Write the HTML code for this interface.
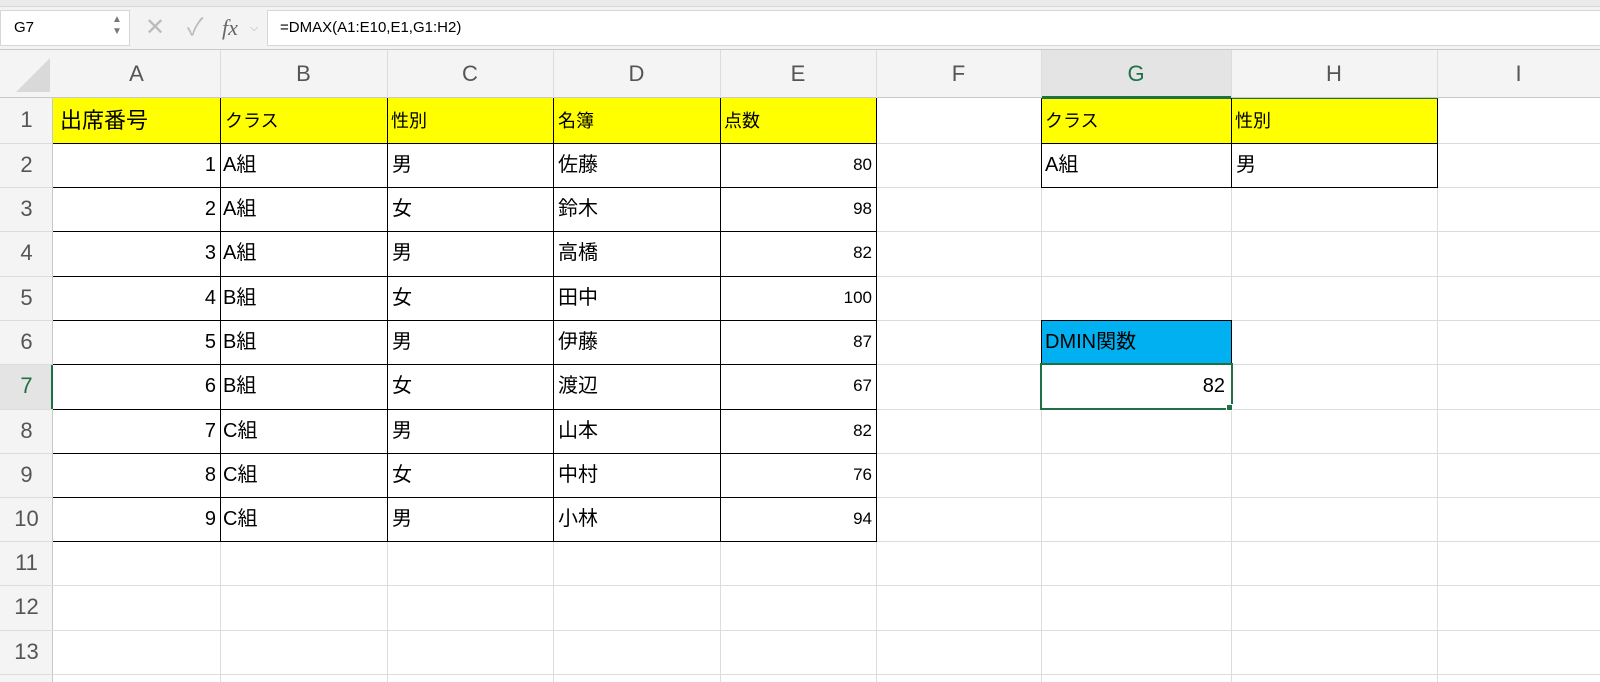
<!DOCTYPE html>
<html><head><meta charset="utf-8"><style>
body{margin:0;width:1600px;height:682px;overflow:hidden;background:#fff;font-family:"Liberation Sans","Noto Sans CJK JP",sans-serif;position:relative}
div{position:absolute;box-sizing:border-box}
.h{left:0;width:1600px;height:1px;background:#dcdcdc}
.v{top:50px;width:1px;height:632px;background:#dcdcdc}
.bh{height:1px;background:#000}
.bv{width:1px;background:#000}
.t{font-size:20px;line-height:44px;height:44px;white-space:nowrap;color:#000}
.r{text-align:right}
.rn{left:0;width:53px;text-align:center;font-size:22px;color:#555;line-height:44px;height:44px}
.cl{top:50px;height:48px;line-height:48px;text-align:center;font-size:22px;color:#555}
.n{font-size:17px}
</style></head><body>
<!-- top bar -->
<div style="left:0;top:0;width:1600px;height:50px;background:#f3f3f3;border-bottom:1px solid #c8c8c8"></div>
<div style="left:0;top:0;width:1600px;height:7px;background:#eaeaea;border-bottom:1px solid #d8d8d8"></div>
<div style="left:0;top:10px;width:130px;height:36px;background:#fff;border:1px solid #d6d6d6"></div>
<div style="left:14px;top:10px;line-height:36px;font-size:15px">G7</div>
<div style="left:112px;top:14px;font-size:10px;color:#777;line-height:12px">▲<br>▼</div>
<div style="left:145px;top:12px;font-size:24px;color:#bbb;line-height:32px">✕</div>
<div style="left:187px;top:12px;font-size:24px;color:#bbb;line-height:32px">✓</div>
<div style="left:222px;top:12px;font-size:22px;color:#666;line-height:32px;font-family:'Liberation Serif',serif;font-style:italic">fx</div>
<div style="left:250px;top:14px;font-size:11px;color:#aaa;line-height:28px">⌵</div>
<div style="left:267px;top:10px;width:1333px;height:36px;background:#fff;border:1px solid #d6d6d6;border-right:none"></div>
<div style="left:280px;top:10px;line-height:36px;font-size:15px">=DMAX(A1:E10,E1,G1:H2)</div>
<!-- headers -->
<div style="left:0;top:50px;width:1600px;height:48px;background:#f4f4f4;border-bottom:1px solid #c8c8c8"></div>
<div style="left:0;top:98px;width:53px;height:584px;background:#f4f4f4;border-right:1px solid #c8c8c8"></div>
<div style="left:16px;top:58px;width:0;height:0;border-left:34px solid transparent;border-bottom:34px solid #d9d9d9"></div>
<div style="left:1041px;top:50px;width:190px;height:48px;background:#e4e4e4;border-bottom:2px solid #1e7145"></div>
<div style="left:0;top:364px;width:53px;height:45px;background:#e4e4e4;border-right:2px solid #1e7145"></div>
<div class="cl" style="left:53px;width:167px">A</div>
<div class="cl" style="left:220px;width:167px">B</div>
<div class="cl" style="left:387px;width:166px">C</div>
<div class="cl" style="left:553px;width:167px">D</div>
<div class="cl" style="left:720px;width:156px">E</div>
<div class="cl" style="left:876px;width:165px">F</div>
<div class="cl" style="left:1041px;width:190px;color:#1e7145">G</div>
<div class="cl" style="left:1231px;width:206px">H</div>
<div class="cl" style="left:1437px;width:163px">I</div>
<div class="rn" style="top:98px">1</div><div class="rn" style="top:143px">2</div><div class="rn" style="top:187px">3</div><div class="rn" style="top:231px">4</div><div class="rn" style="top:276px">5</div><div class="rn" style="top:320px">6</div><div class="rn" style="top:364px;color:#1e7145">7</div><div class="rn" style="top:409px">8</div><div class="rn" style="top:453px">9</div><div class="rn" style="top:497px">10</div><div class="rn" style="top:541px">11</div><div class="rn" style="top:585px">12</div><div class="rn" style="top:630px">13</div>
<!-- gridlines -->
<div class="h" style="top:143px"></div><div class="h" style="top:187px"></div><div class="h" style="top:231px"></div><div class="h" style="top:276px"></div><div class="h" style="top:320px"></div><div class="h" style="top:364px"></div><div class="h" style="top:409px"></div><div class="h" style="top:453px"></div><div class="h" style="top:497px"></div><div class="h" style="top:541px"></div><div class="h" style="top:585px"></div><div class="h" style="top:630px"></div><div class="h" style="top:674px"></div>
<div class="v" style="left:220px"></div><div class="v" style="left:387px"></div><div class="v" style="left:553px"></div><div class="v" style="left:720px"></div><div class="v" style="left:876px"></div><div class="v" style="left:1041px"></div><div class="v" style="left:1231px"></div><div class="v" style="left:1437px"></div>
<!-- fills -->
<div style="left:53px;top:98px;width:823px;height:45px;background:#ffff00"></div>
<div style="left:1041px;top:98px;width:396px;height:45px;background:#ffff00"></div>
<div style="left:1041px;top:320px;width:190px;height:44px;background:#00b0f0"></div>
<!-- black borders A1:E10 -->
<div class="bh" style="left:53px;top:143px;width:823px"></div><div class="bh" style="left:53px;top:187px;width:823px"></div><div class="bh" style="left:53px;top:231px;width:823px"></div><div class="bh" style="left:53px;top:276px;width:823px"></div><div class="bh" style="left:53px;top:320px;width:823px"></div><div class="bh" style="left:53px;top:364px;width:823px"></div><div class="bh" style="left:53px;top:409px;width:823px"></div><div class="bh" style="left:53px;top:453px;width:823px"></div><div class="bh" style="left:53px;top:497px;width:823px"></div><div class="bh" style="left:53px;top:541px;width:823px"></div>
<div class="bv" style="left:220px;top:98px;height:444px"></div><div class="bv" style="left:387px;top:98px;height:444px"></div><div class="bv" style="left:553px;top:98px;height:444px"></div><div class="bv" style="left:720px;top:98px;height:444px"></div><div class="bv" style="left:876px;top:98px;height:444px"></div>
<div style="left:1041px;top:98px;width:397px;height:90px;border:1px solid #000;border-top-color:#1e7145"></div>
<div class="bh" style="left:1041px;top:143px;width:396px"></div>
<div class="bv" style="left:1231px;top:98px;height:89px"></div>
<div style="left:1041px;top:320px;width:191px;height:45px;border:1px solid #000"></div>
<div style="left:1040px;top:363px;width:193px;height:47px;border:2px solid #1e7145"></div>
<div style="left:1226px;top:404px;width:7px;height:7px;background:#1e7145;border:1px solid #fff"></div>
<!-- text row1 -->
<div class="t" style="left:60px;top:99px;font-size:22px">出席番号</div>
<div class="t" style="left:225px;top:99px;font-size:18px">クラス</div>
<div class="t" style="left:391px;top:99px;font-size:18px">性別</div>
<div class="t" style="left:558px;top:99px;font-size:18px">名簿</div>
<div class="t" style="left:724px;top:99px;font-size:18px">点数</div>
<div class="t" style="left:1045px;top:99px;font-size:18px">クラス</div>
<div class="t" style="left:1235px;top:99px;font-size:18px">性別</div>
<div class="t" style="left:1045px;top:143px">A組</div>
<div class="t" style="left:1236px;top:143px">男</div>
<div class="t" style="left:1045px;top:320px">DMIN関数</div>
<div class="t r" style="left:1041px;top:364px;width:184px">82</div>
<!-- data -->
<div class="t r" style="left:53px;top:143px;width:163px">1</div><div class="t" style="left:223px;top:143px">A組</div><div class="t" style="left:392px;top:143px">男</div><div class="t" style="left:558px;top:143px">佐藤</div><div class="t r n" style="left:720px;top:143px;width:152px">80</div>
<div class="t r" style="left:53px;top:187px;width:163px">2</div><div class="t" style="left:223px;top:187px">A組</div><div class="t" style="left:392px;top:187px">女</div><div class="t" style="left:558px;top:187px">鈴木</div><div class="t r n" style="left:720px;top:187px;width:152px">98</div>
<div class="t r" style="left:53px;top:231px;width:163px">3</div><div class="t" style="left:223px;top:231px">A組</div><div class="t" style="left:392px;top:231px">男</div><div class="t" style="left:558px;top:231px">高橋</div><div class="t r n" style="left:720px;top:231px;width:152px">82</div>
<div class="t r" style="left:53px;top:276px;width:163px">4</div><div class="t" style="left:223px;top:276px">B組</div><div class="t" style="left:392px;top:276px">女</div><div class="t" style="left:558px;top:276px">田中</div><div class="t r n" style="left:720px;top:276px;width:152px">100</div>
<div class="t r" style="left:53px;top:320px;width:163px">5</div><div class="t" style="left:223px;top:320px">B組</div><div class="t" style="left:392px;top:320px">男</div><div class="t" style="left:558px;top:320px">伊藤</div><div class="t r n" style="left:720px;top:320px;width:152px">87</div>
<div class="t r" style="left:53px;top:364px;width:163px">6</div><div class="t" style="left:223px;top:364px">B組</div><div class="t" style="left:392px;top:364px">女</div><div class="t" style="left:558px;top:364px">渡辺</div><div class="t r n" style="left:720px;top:364px;width:152px">67</div>
<div class="t r" style="left:53px;top:409px;width:163px">7</div><div class="t" style="left:223px;top:409px">C組</div><div class="t" style="left:392px;top:409px">男</div><div class="t" style="left:558px;top:409px">山本</div><div class="t r n" style="left:720px;top:409px;width:152px">82</div>
<div class="t r" style="left:53px;top:453px;width:163px">8</div><div class="t" style="left:223px;top:453px">C組</div><div class="t" style="left:392px;top:453px">女</div><div class="t" style="left:558px;top:453px">中村</div><div class="t r n" style="left:720px;top:453px;width:152px">76</div>
<div class="t r" style="left:53px;top:497px;width:163px">9</div><div class="t" style="left:223px;top:497px">C組</div><div class="t" style="left:392px;top:497px">男</div><div class="t" style="left:558px;top:497px">小林</div><div class="t r n" style="left:720px;top:497px;width:152px">94</div>
</body></html>
